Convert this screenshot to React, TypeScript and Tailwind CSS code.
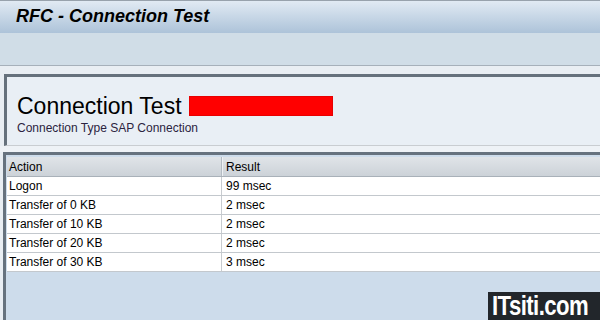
import React from 'react';

const rows = [
    { action: 'Logon', result: '99 msec' },
    { action: 'Transfer of 0 KB', result: '2 msec' },
    { action: 'Transfer of 10 KB', result: '2 msec' },
    { action: 'Transfer of 20 KB', result: '2 msec' },
    { action: 'Transfer of 30 KB', result: '3 msec' },
];

export default function App() {
    return (
        <div className="relative w-[600px] h-[320px] overflow-hidden flex flex-col bg-[#e9eef3] font-['Liberation_Sans',Arial,sans-serif] text-black">
            {/* Title bar */}
            <div className="h-[33px] shrink-0 border-t border-[#98a2ac] bg-gradient-to-b from-[#e1eaf3] to-[#adc3d9] flex items-center pl-4 pb-[3px]">
                <span className="text-[18px] font-bold italic leading-none">RFC - Connection Test</span>
            </div>

            {/* Toolbar */}
            <div className="h-[33px] shrink-0 bg-[#d0dde7] border-b border-[#a6b0ba]" />

            <div className="h-[8px] shrink-0" />

            {/* Header panel */}
            <div className="h-[72px] shrink-0 ml-[4px] border-t-[3px] border-l-[3px] border-b border-t-[#66717c] border-l-[#66717c] border-b-[#c9cdd1] bg-[#e9eff5] pl-[10px] pt-[16px]">
                <div className="flex items-start">
                    <span className="text-[23px] leading-[26px]">Connection Test</span>
                    <span className="ml-[7px] mt-[3px] w-[144px] h-[20px] bg-[#ff0000] border border-[#e80000]" />
                </div>
                <div className="mt-[2px] text-[12px] leading-[14px] text-[#2b2340]">Connection Type SAP Connection</div>
            </div>

            <div className="h-[6px] shrink-0 bg-[#eef2f6]" />

            {/* Result table */}
            <div className="flex-1 ml-[3px] border-t-[3px] border-l-[3px] border-[#66727e] bg-[#cddceb] pt-[2px] pl-[1px]">
                <div className="flex h-[20px] border-b border-[#a9b1b9] bg-gradient-to-b from-[#e0e4e8] to-[#ccd2d8] text-[12px]">
                    <div className="w-[215px] pl-[2px] flex items-center border-r border-[#b4bcc4]">Action</div>
                    <div className="flex-1 pl-[3px] flex items-center border-l border-[#eef1f4]">Result</div>
                </div>
                {rows.map(row => (
                    <div key={row.action} className="flex h-[19px] border-b border-[#c3c8cd] bg-white text-[12px]">
                        <div className="w-[215px] pl-[2px] flex items-center border-r border-[#c8ccd0]">{row.action}</div>
                        <div className="flex-1 pl-[4px] flex items-center">{row.result}</div>
                    </div>
                ))}
            </div>

            {/* Watermark */}
            <div className="absolute right-0 top-[292px] w-[112px] h-[28px] bg-[#22262b] overflow-hidden">
                <span className="absolute left-[4px] top-0 origin-left scale-x-[0.82] text-[27px] leading-[28px] font-bold text-white font-['Liberation_Sans',Arial,sans-serif] whitespace-nowrap tracking-tight">ITsiti.com</span>
            </div>
        </div>
    );
}
